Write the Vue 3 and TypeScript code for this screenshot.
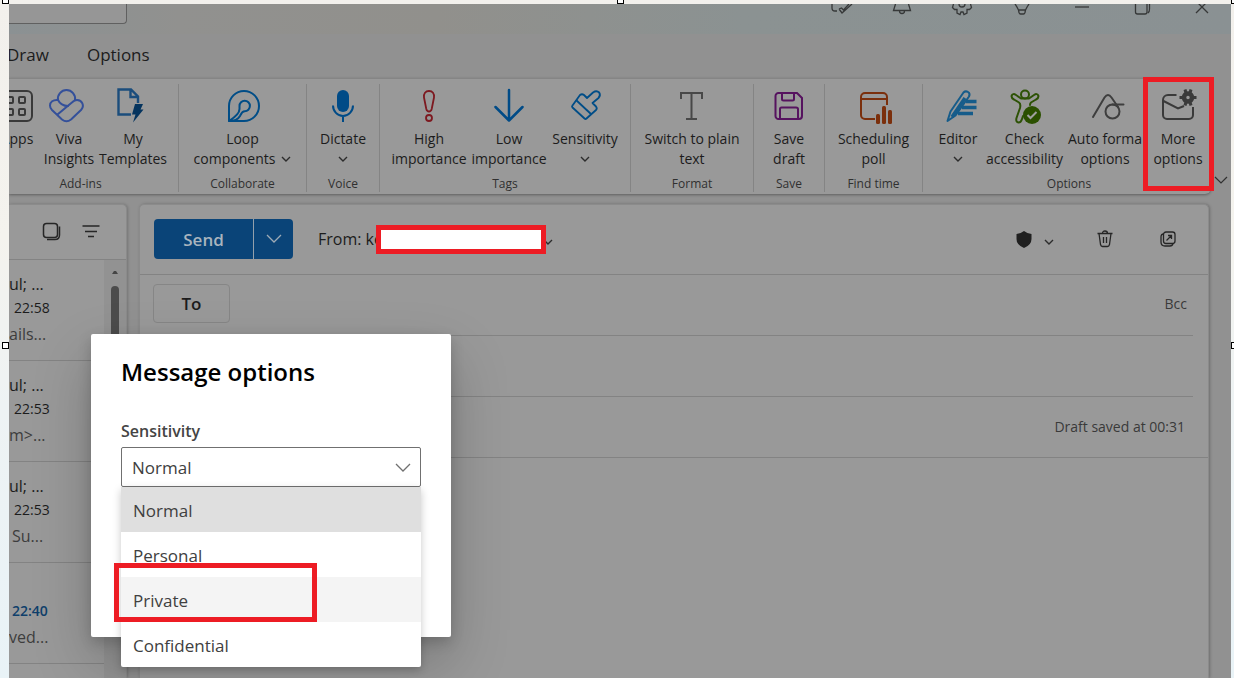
<script setup lang="ts">
import { ref } from 'vue'

interface Command {
  icon: string
  lines: string[]
  chevron?: 'inline' | 'below'
}
interface Group {
  id: string
  label: string
  commands: Command[]
}
interface Mail {
  from: string
  time: string
  preview: string
  unread?: boolean
}

const groups: Group[] = [
  {
    id: 'addins',
    label: 'Add-ins',
    commands: [
      { icon: 'apps', lines: ['Apps'] },
      { icon: 'viva', lines: ['Viva', 'Insights'] },
      { icon: 'templates', lines: ['My', 'Templates'] },
    ],
  },
  { id: 'collaborate', label: 'Collaborate', commands: [{ icon: 'loop', lines: ['Loop', 'components'], chevron: 'inline' }] },
  { id: 'voice', label: 'Voice', commands: [{ icon: 'mic', lines: ['Dictate'], chevron: 'below' }] },
  {
    id: 'tags',
    label: 'Tags',
    commands: [
      { icon: 'high', lines: ['High', 'importance'] },
      { icon: 'low', lines: ['Low', 'importance'] },
      { icon: 'brush', lines: ['Sensitivity'], chevron: 'below' },
    ],
  },
  { id: 'format', label: 'Format', commands: [{ icon: 'plain', lines: ['Switch to plain', 'text'] }] },
  { id: 'save', label: 'Save', commands: [{ icon: 'save', lines: ['Save', 'draft'] }] },
  { id: 'findtime', label: 'Find time', commands: [{ icon: 'poll', lines: ['Scheduling', 'poll'] }] },
  {
    id: 'options',
    label: 'Options',
    commands: [
      { icon: 'editor', lines: ['Editor'], chevron: 'below' },
      { icon: 'check', lines: ['Check', 'accessibility'] },
      { icon: 'auto', lines: ['Auto forma', 'options'] },
      { icon: 'more', lines: ['More', 'options'] },
    ],
  },
]

const icons: Record<string, string> = {
  apps: '<g fill="none" stroke="#393939" stroke-width="2"><rect x="3" y="3" width="30" height="30" rx="5"/><rect x="8" y="9" width="6" height="6" rx="1"/><rect x="20" y="9" width="6" height="6" rx="1"/><rect x="8" y="21" width="6" height="6" rx="1"/><rect x="20" y="21" width="6" height="6" rx="1"/></g>',
  viva: '<g fill="none" stroke="#34509a" stroke-width="2" stroke-linejoin="round" stroke-linecap="round"><path d="M7 12A8.6 8.6 0 1 1 24 12"/><path d="M7 12C2 11.500-1 14-1 17.500C-1 19.500 0 21 1 22L11 31.500Q15.500 35 20 31.500L30 22C34 17.500 31 12 26 12C24 12 22.500 13 21.500 14L6.500 26.500"/><path d="M7 12C9 16 12 18 17 18"/></g>',
  templates: '<path d="M16 26.500H3.500V1.500H16L23 8.500V15M15.500 1.500V9H23" fill="none" stroke="#1b4d7c" stroke-width="2.400"/><path d="M20 16H28L25.500 21.500H28.500L18 34.500L20.500 26.500H17Z" fill="#05345e"/>',
  loop: '<g fill="none" stroke="#004d87" stroke-width="2" stroke-linejoin="round"><path d="M4 33V18A15 15 0 1 1 19 33Z"/><path d="M14.500 18A5.200 5.200 0 1 1 19.700 23.200C17 23.200 16.500 25 15 28C13 31.500 8 33 4 33C8 30.500 14.500 26 14.500 21Z"/></g>',
  mic: '<rect x="12" y="2" width="12" height="22" rx="6" fill="#004b87"/><path d="M8 17.500A10 10.500 0 0 0 28 17.500M18 28V34" fill="none" stroke="#004b87" stroke-width="2"/>',
  high: '<g fill="none" stroke="#7d1920" stroke-width="1.800"><path d="M18 3C14.500 3 12.500 5.500 13 9.500L15.300 21Q16 23.500 18 23.500T20.700 21L23 9.500C23.500 5.500 21.500 3 18 3Z"/><circle cx="18" cy="30" r="3"/></g>',
  low: '<path d="M18 2V32M4.500 19L18 32.500L31.500 19" fill="none" stroke="#004b87" stroke-width="2.500" stroke-linecap="round" stroke-linejoin="round"/>',
  brush: '<g fill="none" stroke="#004d87" stroke-width="1.800" stroke-linejoin="round"><path d="M13 7Q15 5.500 17 7L20 10L26 4.500Q29.500 2 32.200 4.500Q34 7.500 31.500 10L25.500 15L29 18.500Q30.500 20.500 29 22L19.500 30.500Q18.500 31.500 17.500 30.500L5.500 19.500Q4.500 18.500 5.500 17.500Z"/><path d="M9 12L24.500 26.500"/></g>',
  plain: '<path d="M7 11V5H28V11M17.500 5V31M12 31H23" fill="none" stroke="#484848" stroke-width="2"/>',
  save: '<g fill="none" stroke="#56135f" stroke-width="2"><path d="M7.500 5H26L31 10V28A3 3 0 0 1 28 31H7.500A3 3 0 0 1 4.500 28V8A3 3 0 0 1 7.500 5Z"/><path d="M11 5V11Q11 12.500 12.500 12.500H21.500Q23 12.500 23 11V5M9 31V21Q9 19.500 10.500 19.500H25Q27 19.500 27 21V31"/></g>',
  poll: '<path d="M19 31H9A4 4 0 0 1 5 27V9A4 4 0 0 1 9 5H27A4 4 0 0 1 31 9V17M5 11H31" fill="none" stroke="#7b2f0c" stroke-width="2"/><g fill="#7b2f0c"><rect x="20" y="26" width="4" height="10" rx="1.500"/><rect x="26" y="18" width="4" height="18" rx="1.500"/><rect x="32" y="22" width="4" height="14" rx="1.500"/></g>',
  editor: '<path d="M7.500 33L10.500 23.500L23.500 4.500Q25.500 2.500 28 4Q30.500 5.500 29 8.500L15.500 27.500Z" fill="none" stroke="#165c8a" stroke-width="2" stroke-linejoin="round"/><path d="M26 13.500H36.500M22 19.500H36.500M18 25.500H33M25 10L12 29" stroke="#165c8a" stroke-width="3.500"/>',
  check: '<g fill="none" stroke="#2d5205" stroke-width="2" stroke-linecap="round" stroke-linejoin="round"><circle cx="18" cy="6.500" r="4"/><path d="M14 10.500L9 7Q6 5 4.700 7.500Q4 10 7 11.500L12 14.500Q14 16 13 20L9.500 30Q8.500 34 11.500 34.500Q14 34.500 15 31L16 28M22 10.500L27 7Q30 5 31.300 7.500Q32 10 29 11.500L24 14.500Q23 15.500 23 17M14 10.500H22"/></g><circle cx="25" cy="27" r="9" fill="#2b5000"/><path d="M20.500 27L23.500 30L29.500 24" fill="none" stroke="#a0a0a0" stroke-width="2"/>',
  auto: '<g fill="none" stroke="#3e3e3e" stroke-width="2" stroke-linecap="round"><path d="M6 29L17.500 9.500Q21 4.500 24.500 9.500L31 19"/><circle cx="25.500" cy="23.500" r="7"/><path d="M25.500 16.500H36.500"/></g>',
  more: '<g fill="none" stroke="#3a3a3a" stroke-width="2"><path d="M16.500 7H8A5 5 0 0 0 3 12V27A4 4 0 0 0 7 31H29A4 4 0 0 0 33 27V19"/><path d="M3.500 13L18 20.500L24 18"/><circle cx="28" cy="9.500" r="4" stroke-width="4.500"/><path d="M25 1.500L26 5M31 1.500L30 5M25 17.500L26 14M31 17.500L30 14M19.500 9.500H23M33 9.500H36.500" stroke-width="3"/></g>',
}

const titleIcons: { name: string; path: string }[] = [
  { name: 'My Day', path: 'M2 0V4Q2 7 5 7H7M9 5L11.500 4L13.500 6L19 0M9 5L12 9L22 0' },
  { name: 'Notifications', path: 'M5.500 0L3.500 6.500H20.500L18.500 0M9.500 7A2.500 2.500 0 0 0 14.500 7' },
  { name: 'Settings', path: 'M3.500 0L2.500 3.500L4.500 5.500H7V9L10 10.500L11 8H13L14 10.500L17 9V5.500H19.500L21.500 3.500L20.500 0M9 0A3 3 0 0 0 15 0' },
  { name: 'Tips', path: 'M5 0Q7 3 8.500 6L9 8.500Q9.500 10 10.500 10H13.500Q14.500 10 15 8.500L15.500 6Q17 3 19 0M8.500 6H15.500' },
  { name: 'Minimize', path: 'M5 3H19' },
  { name: 'Restore', path: 'M5.500 0V8Q5.500 10 7.500 10H15Q17 10 17 8V0M19.500 0V5Q19.500 8 18 9' },
  { name: 'Close', path: 'M6 9L18-3M18 9L6-3' },
]

const mails: Mail[] = [
  { from: 'ul; ...', time: '22:58', preview: 'ails...' },
  { from: 'ul; ...', time: '22:53', preview: 'm>...' },
  { from: 'ul; ...', time: '22:53', preview: 'Su...' },
  { from: '', time: '22:40', preview: 'ved...', unread: true },
  { from: '', time: '', preview: '' },
]

const levels = ['Normal', 'Personal', 'Private', 'Confidential']
const sensitivity = ref('Normal')
const hovered = ref('Private')
</script>

<template>
  <div class="canvas">
    <div class="window">
      <header class="titlebar">
        <input class="search" type="text" aria-label="Search" />
        <div class="title-actions">
          <button v-for="t in titleIcons" :key="t.name" type="button" :aria-label="t.name">
            <svg width="24" height="12" viewBox="0 0 24 12"><path :d="t.path" /></svg>
          </button>
        </div>
      </header>

      <nav class="tabs">
        <button type="button">Draw</button>
        <button type="button">Options</button>
      </nav>

      <div class="ribbon-row">
        <div class="ribbon">
          <section v-for="g in groups" :key="g.id" class="group" :class="g.id">
            <div class="commands">
              <button v-for="c in g.commands" :key="c.icon" type="button" class="command" :class="c.icon">
                <svg class="icon" width="36" height="36" viewBox="0 0 36 36" v-html="icons[c.icon]"></svg>
                <span v-for="(l, i) in c.lines" :key="l" class="line">{{ l }}<svg
                    v-if="c.chevron === 'inline' && i === c.lines.length - 1"
                    class="chev" width="10" height="6" viewBox="0 0 10 6"><path d="M1 1L5 5L9 1" /></svg></span>
                <span v-if="c.chevron === 'below'" class="line"><svg class="chev" width="10" height="6" viewBox="0 0 10 6"><path d="M1 1L5 5L9 1" /></svg></span>
              </button>
            </div>
            <div class="group-label">{{ g.label }}</div>
          </section>
        </div>
        <button class="collapse" type="button" aria-label="Ribbon display options">
          <svg width="14" height="8" viewBox="0 0 14 8"><path d="M1 1L7 7L13 1" /></svg>
        </button>
      </div>

      <main class="body">
        <aside class="list">
          <div class="list-head">
            <button type="button" aria-label="Select">
              <svg width="20" height="20" viewBox="0 0 20 20"><rect x="1.500" y="1.500" width="14" height="14" rx="3" /><path d="M5 17.500H13Q17.500 17.500 17.500 13V4.500" /></svg>
            </button>
            <button type="button" aria-label="Filter">
              <svg width="20" height="20" viewBox="0 0 20 20"><path d="M1.500 4H18.500M4 9.500H16M7 14.500H13" /></svg>
            </button>
          </div>
          <div class="list-body">
            <ul class="mails">
              <li v-for="(m, i) in mails" :key="i" :class="{ unread: m.unread }">
                <span class="from">{{ m.from }}</span>
                <span class="time">{{ m.time }}</span>
                <span class="preview" :class="{ inset: m.preview === 'Su...' }">{{ m.preview }}</span>
              </li>
            </ul>
            <div class="scroll">
              <svg width="8" height="4" viewBox="0 0 8 4"><path d="M1 4L3 1H5L7 4Z" /></svg>
              <div class="thumb"></div>
            </div>
          </div>
        </aside>

        <section class="compose">
          <div class="compose-head">
            <div class="send">
              <button type="button" class="send-main">Send</button>
              <button type="button" class="send-more" aria-label="More send options">
                <svg width="16" height="10" viewBox="0 0 16 10"><path d="M1 1L8 8L15 1" /></svg>
              </button>
            </div>
            <div class="sender">
              <span>From: ke</span>
              <span class="redacted"></span>
              <svg class="thin" width="10" height="6" viewBox="0 0 10 6"><path d="M1 1L5 5L9 1" /></svg>
            </div>
            <div class="tools">
              <button type="button" aria-label="Sensitivity label" class="shield">
                <svg width="16" height="17" viewBox="0 0 16 17"><path d="M8 0Q11 2.500 15.500 3V8Q15.500 14 8 17Q.5 14 .5 8V3Q5 2.500 8 0Z" /></svg>
                <svg class="thin" width="10" height="6" viewBox="0 0 10 6"><path d="M1 1L5 5L9 1" /></svg>
              </button>
              <button type="button" aria-label="Discard">
                <svg class="stroke" width="16" height="18" viewBox="0 0 16 18"><path d="M.5 3.500H15.500M5.500 3.500Q5.500 1 8 1T10.500 3.500M2 3.500L3.500 14.500Q4 16.500 5.500 16.500H10.500Q12 16.500 12.500 14.500L14 3.500M6.500 7V13M9.500 7V13" /></svg>
              </button>
              <button type="button" aria-label="Open in new window">
                <svg class="stroke" width="16" height="16" viewBox="0 0 16 16"><rect x="3.500" y="1" width="11.500" height="11.500" rx="2.500" /><path d="M3.500 3Q1 3 1 6V11Q1 15 5 15H10Q12.500 15 13 12.500M6.500 9.500L11.500 4.500M8 4.500H11.500V8" /></svg>
              </button>
            </div>
          </div>
          <div class="fields">
            <div class="field">
              <button type="button" class="to">To</button>
              <button type="button" class="bcc">Bcc</button>
            </div>
            <div class="field"></div>
          </div>
          <div class="subject"><span>Draft saved at 00:31</span></div>
        </section>
      </main>
    </div>

    <section class="dialog" role="dialog" aria-labelledby="dlg-title">
      <h2 id="dlg-title">Message options</h2>
      <label for="sens">Sensitivity</label>
      <div class="picker">
        <select id="sens" v-model="sensitivity">
          <option v-for="l in levels" :key="l">{{ l }}</option>
        </select>
        <svg width="16" height="9" viewBox="0 0 16 9"><path d="M1 1L8 8L15 1" /></svg>
        <ul class="menu" role="listbox" aria-label="Sensitivity levels">
          <li
            v-for="l in levels"
            :key="l"
            role="option"
            :aria-selected="l === sensitivity"
            :class="{ selected: l === sensitivity, hover: l === hovered }"
            @click="sensitivity = l"
            @mouseenter="hovered = l"
          >{{ l }}</li>
        </ul>
      </div>
    </section>

    <div class="mark mark-more"></div>
    <div class="mark mark-private"></div>
    <i class="handle tl"></i><i class="handle tc"></i><i class="handle tr"></i>
    <i class="handle ml"></i><i class="handle mr"></i>
  </div>
</template>

<style>
body {
  margin: 0;
  overflow: hidden;
}
</style>

<style scoped>
.canvas {
  position: relative;
  box-sizing: border-box;
  height: 100vh;
  overflow: hidden;
  padding: 4px 3px 0 9px;
  background: linear-gradient(#f2f0ec, #f4f3ee 35%, #eef3f4 60%, #e9f3f7);
  font-family: "Open Sans", "Noto Sans", sans-serif;
  color: #1c1c1c;
}
.canvas * { box-sizing: border-box; }
button {
  border: 0;
  padding: 0;
  background: none;
  font: inherit;
  color: inherit;
}
ul { list-style: none; margin: 0; padding: 0; }
svg { display: block; overflow: visible; }

.window {
  display: flex;
  flex-direction: column;
  height: 100%;
  overflow: hidden;
  background: #919191;
}
.titlebar {
  display: flex;
  justify-content: space-between;
  align-items: flex-start;
  flex: none;
  height: 30px;
  background: linear-gradient(90deg, #8b9193, #91918f 14%, #91908c 35%, #8b9292 60%, #8a9193);
  overflow: hidden;
}
.search {
  width: 118px;
  height: 20px;
  border: 1px solid #606060;
  border-width: 0 1px 1px 0;
  border-radius: 0 0 4px 0;
  background: #969696;
}
.title-actions { display: flex; overflow: hidden; margin-right: -1px; }
.title-actions button { width: 60px; display: flex; justify-content: center; }
.title-actions path { fill: none; stroke: #363838; stroke-width: 1.3; }

.tabs {
  display: flex;
  align-items: center;
  flex: none;
  gap: 38px;
  height: 44px;
  margin-left: -2px;
  padding-bottom: 4px;
  font-size: 17px;
}

.ribbon-row { display: flex; align-items: flex-end; flex: none; }
.ribbon {
  flex: 1;
  display: grid;
  grid-template-columns: 170fr 128fr 73fr 251fr 123fr 71fr 98fr 288fr;
  height: 116px;
  padding: 5px 0 4px;
  border-top: 1px solid #858585;
  border-radius: 0 0 6px 0;
  background: #999;
  box-shadow: 0 1px 3px rgba(0, 0, 0, 0.35);
}
.group {
  display: flex;
  flex-direction: column;
  min-width: 0;
  border-right: 1px solid #848484;
}
.group:last-child { border-right: 0; }
.commands {
  display: grid;
  grid-auto-flow: column;
  justify-content: center;
  height: 92px;
  padding-top: 4px;
}
.addins .commands { grid-template-columns: 48px 56px 72px; justify-content: end; padding-right: 9px; }
.tags .commands { grid-template-columns: 80px 80px 72px; }
.options .commands { grid-template-columns: 52px 81px 80px 66px; justify-content: end; }
.addins .group-label { padding-right: 26px; }
.options .group-label { padding-left: 4px; }
.command {
  display: flex;
  flex-direction: column;
  align-items: center;
  justify-content: flex-start;
  font-size: 14px;
  line-height: 20px;
  white-space: nowrap;
}
.icon { flex: none; margin-bottom: 5px; }
.line { display: flex; align-items: center; justify-content: center; gap: 6px; height: 20px; }
.chev path, .thin path { fill: none; stroke: #2c2c2c; stroke-width: 1.4; }
.group-label { text-align: center; font-size: 12px; line-height: 16px; color: #303030; }
.collapse { width: 20px; display: flex; justify-content: center; padding-bottom: 10px; }
.collapse path { fill: none; stroke: #303030; stroke-width: 1.2; }

.body {
  flex: 1;
  min-height: 0;
  display: flex;
  gap: 12px;
  padding: 10px 22px 0 0;
}
.list {
  flex: none;
  width: 118px;
  display: flex;
  flex-direction: column;
  border: 1px solid #8b8b8b;
  border-width: 1px 1px 0 0;
  border-radius: 0 5px 0 0;
  background: #999;
  box-shadow: 1px 0 3px rgba(0, 0, 0, 0.2);
}
.list-head {
  flex: none;
  display: flex;
  justify-content: flex-end;
  align-items: center;
  gap: 19px;
  height: 55px;
  padding-right: 25px;
  border-bottom: 1px solid #838383;
}
.list-head svg { fill: none; stroke: #262626; stroke-width: 1.5; }
.list-body { flex: 1; min-height: 0; display: flex; overflow: hidden; }
.mails { flex: 1; }
.mails li {
  display: flex;
  flex-direction: column;
  height: 101px;
  padding-top: 12px;
  border-bottom: 1px solid #838383;
}
.from { height: 24px; font-size: 16px; line-height: 24px; }
.time { height: 24px; padding-left: 5px; font-size: 14px; line-height: 24px; }
.preview { height: 28px; font-size: 16px; line-height: 28px; color: #3d3d3d; }
.inset { padding-left: 3px; }
.unread .time { padding-left: 3px; color: #0f3f6b; font-weight: 600; }
.scroll { flex: none; width: 22px; padding-top: 10px; background: #929292; }
.scroll svg { margin: 0 auto 12px; fill: #454545; }
.thumb { width: 8px; height: 170px; margin: 0 auto; border-radius: 4px; background: #4c4c4c; }

.compose {
  flex: 1;
  border: 1px solid #8b8b8b;
  border-bottom: 0;
  border-radius: 5px 5px 0 0;
  background: #999;
  box-shadow: 1px 0 3px rgba(0, 0, 0, 0.25);
}
.compose-head {
  display: flex;
  align-items: center;
  height: 70px;
  padding: 0 32px 1px 14px;
  border-bottom: 1px solid #838383;
}
.send {
  display: flex;
  height: 40px;
  border-radius: 4px;
  overflow: hidden;
  background: #0a4478;
  color: #a9b4be;
}
.send-main { width: 99px; font-size: 17px; font-weight: 600; }
.send-more {
  width: 40px;
  display: flex;
  align-items: center;
  justify-content: center;
  border-left: 1px solid #93a0ab;
}
.send-more path { fill: none; stroke: #9eabb6; stroke-width: 1.3; }
.sender { display: flex; align-items: center; margin-left: 25px; font-size: 16px; }
.sender > span:first-child { width: 58px; white-space: nowrap; }
.redacted {
  position: relative;
  width: 170px;
  height: 29px;
  border: 5px solid #ed1c24;
  background: #fff;
}
.sender .thin { margin: 6px 0 0 -3px; }
.tools { display: flex; align-items: center; gap: 47px; margin-left: auto; }
.tools button { display: flex; align-items: center; }
.shield { gap: 12px; }
.tools .shield { margin-right: -4px; }
.shield svg:first-child { fill: #202020; }
.shield .thin { margin-top: 6px; }
.stroke { fill: none; stroke: #262626; stroke-width: 1.3; }
.tools .stroke { flex: none; }
.fields { padding: 0 15px 0 13px; }
.field {
  display: flex;
  align-items: center;
  justify-content: space-between;
  height: 61px;
  padding: 0 6px 3px 0;
  border-bottom: 1px solid #838383;
}
.to {
  width: 77px;
  height: 39px;
  border: 1px solid #868686;
  border-radius: 4px;
  font-size: 17px;
  font-weight: 600;
}
.bcc, .subject { font-size: 14px; color: #3a3a3a; }
.subject {
  display: flex;
  align-items: center;
  justify-content: flex-end;
  height: 61px;
  padding: 0 23px 2px 0;
  border-bottom: 1px solid #838383;
}

.dialog {
  position: absolute;
  left: 91px;
  top: 334px;
  width: 360px;
  height: 303px;
  padding: 20px 30px;
  border-radius: 2px;
  background: #fff;
  box-shadow: 0 26px 58px rgba(0, 0, 0, 0.22), 0 5px 14px rgba(0, 0, 0, 0.18);
}
h2 { margin: 0; font-size: 24px; line-height: 36px; font-weight: 600; color: #000; white-space: nowrap; }
label { display: block; margin: 30px 0 5px; font-size: 16px; line-height: 22px; font-weight: 600; color: #444; }
.picker { position: relative; }
select {
  display: block;
  width: 100%;
  height: 40px;
  padding: 0 10px;
  border: 1px solid #707070;
  border-radius: 2px;
  appearance: none;
  background: #fff;
  font: inherit;
  font-size: 17px;
  color: #404040;
}
.picker > svg { position: absolute; right: 10px; top: 16px; pointer-events: none; }
.picker > svg path { fill: none; stroke: #707070; stroke-width: 1.3; }
.menu {
  position: absolute;
  left: 0;
  top: 40px;
  width: 100%;
  border-radius: 0 0 2px 2px;
  background: #fff;
  box-shadow: 0 3px 8px rgba(0, 0, 0, 0.22);
}
.menu li { height: 45px; padding: 0 12px; font-size: 17px; line-height: 47px; color: #404040; }
.menu .hover { background: #f4f4f4; }
.menu .selected { background: #dfdfdf; }

.mark { position: absolute; border: 5px solid #ed1c24; pointer-events: none; }
.mark-more { right: 20px; top: 77px; width: 71px; height: 114px; }
.mark-private { left: 114px; top: 563px; width: 203px; height: 59px; }
.handle { position: absolute; width: 7px; height: 7px; border: 1px solid #000; background: #fff; }
.tl { left: 2px; top: -3px; }
.tc { left: 50%; top: -3px; }
.tr { right: -4px; top: -3px; }
.ml { left: 2px; top: 342px; }
.mr { right: -4px; top: 342px; }
</style>
